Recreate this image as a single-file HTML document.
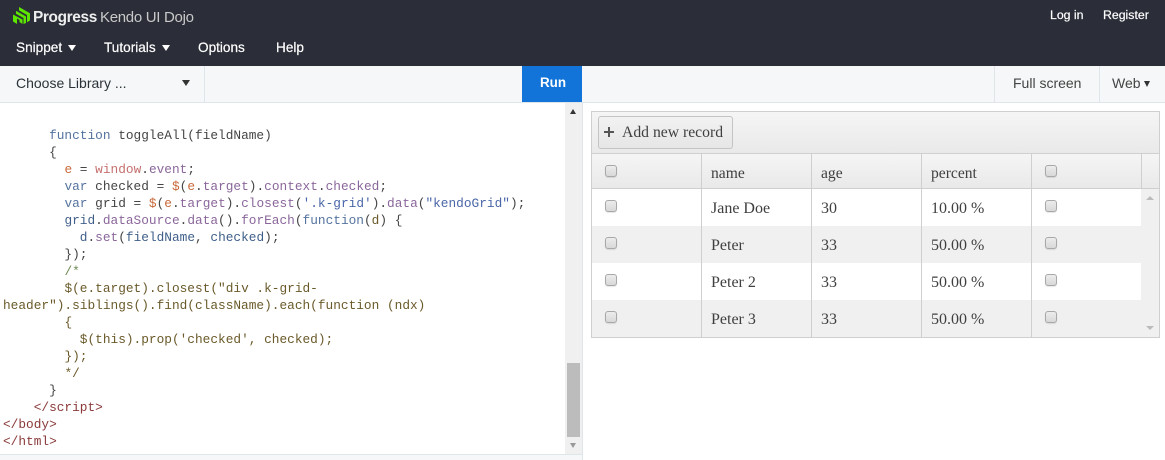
<!DOCTYPE html>
<html><head><meta charset="utf-8"><style>
html,body{margin:0;padding:0;width:1165px;height:460px;overflow:hidden;background:#fff}
body{position:relative;font-family:"Liberation Sans",sans-serif}
.a{position:absolute;white-space:nowrap}
.n{color:#fff;font-size:13.6px;line-height:16px;-webkit-text-stroke:.2px #fff}
.t{font-size:14px;line-height:18px}
.tri{position:absolute;width:0;height:0;border-left:4px solid transparent;border-right:4px solid transparent;border-top:6px solid #fff}
#code{position:absolute;left:3px;top:127px;font:12.8px/17px "Liberation Mono",monospace;color:#444;white-space:pre;margin:0}
.k{color:#55739f}.v{color:#3f5f8a}.o{color:#c8693a}.r{color:#c5706f}.p{color:#8a669b}.q{color:#4a66a8}.c{color:#6f8a55}.h{color:#8a3a3a}.d{color:#6a5a2a}
.cell{position:absolute;font:16px/18px "Liberation Serif",serif;color:#3f3f3f;white-space:nowrap}
.hd{font-size:15.6px}
.vl{position:absolute;width:1px;background:#cfcfcf}
.cb{position:absolute;width:10px;height:10px;border:1px solid #a8a8a8;border-radius:3px;background:linear-gradient(#ececec,#d8d8d8);box-shadow:0 1px 1px rgba(0,0,0,.1)}
</style></head><body>
<div class="a" style="left:0;top:0;width:1165px;height:66px;background:#2b2e38"></div>
<svg class="a" style="left:13px;top:7px" width="17" height="17" viewBox="0 0 17 17"><path d="M6 0L17 6.300V13.500L14 15.300V8L6 3.400Z" fill="#5ce500"/><path d="M3 3.800L13 9.500V16L10.500 17V11L3 6.700Z" fill="#5ce500"/><path d="M0 7.500L9.500 12.500V17L6.500 15V13L4 11.500V17L0 14.500Z" fill="#5ce500"/></svg>
<div class="a" style="left:33px;top:8px;font-size:15.4px;line-height:20px;font-weight:bold;color:#eee;letter-spacing:-.35px">Progress</div>
<div class="a" style="left:100px;top:8px;font-size:15px;line-height:20px;color:#c9c9c9;letter-spacing:-.3px">Kendo UI Dojo</div>
<div class="a n" style="left:16px;top:40px">Snippet</div><div class="tri" style="left:68px;top:45px"></div>
<div class="a n" style="left:104px;top:40px">Tutorials</div><div class="tri" style="left:162px;top:45px"></div>
<div class="a n" style="left:198px;top:40px">Options</div>
<div class="a n" style="left:276px;top:40px">Help</div>
<div class="a n" style="left:1050px;top:7px;font-size:12.3px">Log in</div>
<div class="a n" style="left:1103px;top:7px;font-size:12.3px">Register</div>

<div class="a" style="left:0;top:66px;width:1165px;height:36px;background:#f5f7f8;border-bottom:1px solid #dfe6e9"></div>
<div class="a t" style="left:16px;top:74px;color:#2c3338">Choose Library ...</div>
<div class="tri" style="left:182px;top:80px;border-top-color:#333"></div>
<div class="a" style="left:204px;top:66px;width:1px;height:36px;background:#dfe6e9"></div>
<div class="a" style="left:522px;top:66px;width:60px;height:36px;background:#1274d8"></div>
<div class="a" style="left:540px;top:74px;color:#fff;font-size:13.4px;line-height:18px;font-weight:bold">Run</div>
<div class="a" style="left:994px;top:66px;width:1px;height:36px;background:#dfe6e9"></div>
<div class="a t" style="left:1013px;top:74px;color:#444">Full screen</div>
<div class="a" style="left:1099px;top:66px;width:1px;height:36px;background:#dfe6e9"></div>
<div class="a t" style="left:1112px;top:74px;color:#444">Web</div>
<div class="tri" style="left:1144px;top:81px;border-top-color:#333;border-left-width:3.500px;border-right-width:3.500px"></div>

<div class="a" style="left:582px;top:103px;width:1px;height:357px;background:#dfe6e9"></div>
<div class="a" style="left:565px;top:103px;width:17px;height:351px;background:#f0f0f0"></div>
<div class="a" style="left:567px;top:363px;width:13px;height:74px;background:#bcbcbc"></div>
<div class="tri" style="left:570px;top:109px;border-top:0;border-bottom:5px solid #333;border-left-width:3.500px;border-right-width:3.500px"></div>
<div class="tri" style="left:570px;top:443px;border-top:5px solid #999;border-left-width:3.500px;border-right-width:3.500px"></div>
<div class="a" style="left:0;top:454px;width:582px;height:6px;background:#f5f7f8;border-top:1px solid #dfe6e9;box-sizing:border-box"></div>

<pre id="code">      <span class="k">function</span> toggleAll(fieldName)
      {
        <span class="o">e</span> = <span class="r">window</span>.<span class="p">event</span>;
        <span class="k">var</span> checked = <span class="o">$</span>(<span class="o">e</span>.<span class="p">target</span>).<span class="p">context</span>.<span class="p">checked</span>;
        <span class="k">var</span> grid = <span class="o">$</span>(<span class="o">e</span>.<span class="p">target</span>).<span class="p">closest</span>(<span class="q">'.k-grid'</span>).<span class="p">data</span>(<span class="q">"kendoGrid"</span>);
        <span class="v">grid</span>.<span class="p">dataSource</span>.<span class="p">data</span>().<span class="p">forEach</span>(<span class="k">function</span>(<span class="d">d</span>) {
          <span class="v">d</span>.<span class="p">set</span>(<span class="v">fieldName</span>, <span class="v">checked</span>);
        });
        <span class="c">/*</span>
        <span class="d">$(e.target).closest("div .k-grid-</span>
<span class="d">header").siblings().find(className).each(function (ndx)</span>
        <span class="d">{</span>
          <span class="d">$(this).prop('checked', checked);</span>
        <span class="d">});</span>
        <span class="d">*/</span>
      }
    <span class="h">&lt;/script&gt;</span>
<span class="h">&lt;/body&gt;</span>
<span class="h">&lt;/html&gt;</span></pre>

<div class="a" style="left:591px;top:111px;width:569px;height:227px;border:1px solid #cfcfcf;box-sizing:border-box;background:#f0f0f0"></div>
<div class="a" style="left:592px;top:112px;width:567px;height:41px;background:linear-gradient(#f5f5f5,#e9e9e9);border-bottom:1px solid #cfcfcf"></div>
<div class="a" style="left:598px;top:116px;width:135px;height:33px;box-sizing:border-box;border:1px solid #c4c4c4;border-radius:3px;background:linear-gradient(#f2f2f2,#e6e6e6)"></div>
<div class="a" style="left:604px;top:131px;width:10px;height:2px;background:#555"></div>
<div class="a" style="left:608px;top:127px;width:2px;height:10px;background:#555"></div>
<div class="cell" style="left:622px;top:124px;font-size:15.7px">Add new record</div>
<div class="a" style="left:592px;top:154px;width:567px;height:34px;background:linear-gradient(#f5f5f5,#e9e9e9);border-bottom:1px solid #cfcfcf"></div>
<div class="a" style="left:592px;top:189px;width:549px;height:37px;background:#fff"></div>
<div class="a" style="left:592px;top:226px;width:549px;height:37px;background:#f0f0f0"></div>
<div class="a" style="left:592px;top:263px;width:549px;height:37px;background:#fff"></div>
<div class="a" style="left:592px;top:300px;width:549px;height:37px;background:#f0f0f0"></div>
<div class="vl" style="left:701px;top:154px;height:183px"></div>
<div class="vl" style="left:811px;top:154px;height:183px"></div>
<div class="vl" style="left:921px;top:154px;height:183px"></div>
<div class="vl" style="left:1031px;top:154px;height:183px"></div>
<div class="vl" style="left:1141px;top:154px;height:34px"></div>

<div class="cb" style="left:605px;top:165px"></div>
<div class="cb" style="left:1045px;top:165px"></div>
<div class="cell hd" style="left:711px;top:165px">name</div>
<div class="cell hd" style="left:821px;top:165px">age</div>
<div class="cell hd" style="left:931px;top:165px">percent</div>

<div class="cb" style="left:605px;top:200px"></div><div class="cb" style="left:1045px;top:200px"></div>
<div class="cell" style="left:711px;top:200px">Jane Doe</div><div class="cell" style="left:821px;top:200px">30</div><div class="cell" style="left:931px;top:200px">10.00 %</div>
<div class="cb" style="left:605px;top:237px"></div><div class="cb" style="left:1045px;top:237px"></div>
<div class="cell" style="left:711px;top:237px">Peter</div><div class="cell" style="left:821px;top:237px">33</div><div class="cell" style="left:931px;top:237px">50.00 %</div>
<div class="cb" style="left:605px;top:274px"></div><div class="cb" style="left:1045px;top:274px"></div>
<div class="cell" style="left:711px;top:274px">Peter 2</div><div class="cell" style="left:821px;top:274px">33</div><div class="cell" style="left:931px;top:274px">50.00 %</div>
<div class="cb" style="left:605px;top:311px"></div><div class="cb" style="left:1045px;top:311px"></div>
<div class="cell" style="left:711px;top:311px">Peter 3</div><div class="cell" style="left:821px;top:311px">33</div><div class="cell" style="left:931px;top:311px">50.00 %</div>

<div class="tri" style="left:1146px;top:196px;border-top:0;border-bottom:4px solid #bbb;border-left-width:4px;border-right-width:4px"></div>
<div class="tri" style="left:1146px;top:326px;border-top:4px solid #bbb"></div>
</body></html>
